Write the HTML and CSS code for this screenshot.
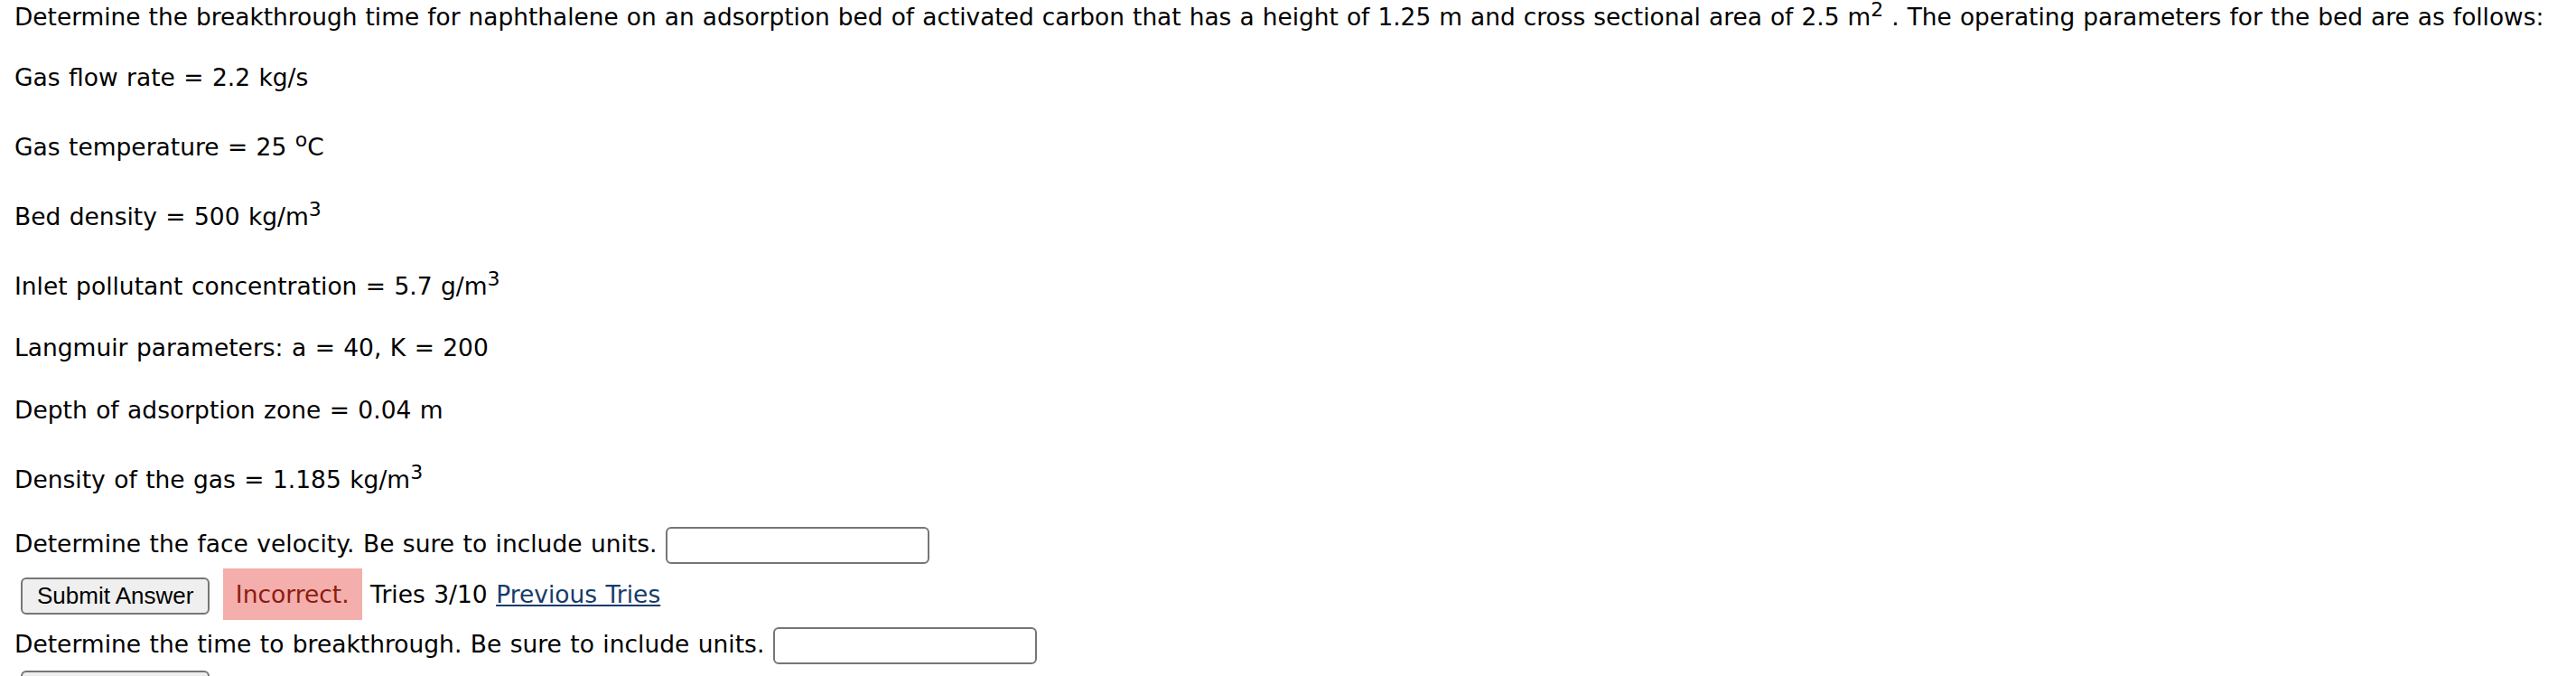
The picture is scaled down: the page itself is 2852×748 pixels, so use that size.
FILE: index.html
```html
<!DOCTYPE html>
<html lang="en">
<head>
<meta charset="utf-8">
<title>Adsorption bed breakthrough</title>
<link rel="stylesheet" href="styles.css">
</head>
<body>
<div class="page">
  <div class="intro">Determine the breakthrough time for naphthalene on an adsorption bed of activated carbon that has a height of 1.25 m and cross sectional area of 2.5 m<sup class="flat">2</sup> . The operating parameters for the bed are as follows:</div>
  <div class="param first">Gas flow rate = 2.2 kg/s</div>
  <div class="param">Gas temperature = 25 <sup>o</sup>C</div>
  <div class="param">Bed density = 500 kg/m<sup>3</sup></div>
  <div class="param">Inlet pollutant concentration = 5.7 g/m<sup>3</sup></div>
  <div class="param">Langmuir parameters: a = 40, K = 200</div>
  <div class="param">Depth of adsorption zone = 0.04 m</div>
  <div class="param">Density of the gas = 1.185 kg/m<sup>3</sup></div>
  <div class="question first-q">Determine the face velocity. Be sure to include units. <input class="answer" type="text"></div>
  <div class="submit-row"><button class="submit" type="button">Submit Answer</button> <span class="incorrect">Incorrect.</span> Tries 3/10 <a class="prev" href="#">Previous Tries</a></div>
  <div class="question">Determine the time to breakthrough. Be sure to include units. <input class="answer" type="text"></div>
  <div class="submit-row last"><button class="submit" type="button">Submit Answer</button></div>
</div>
</body>
</html>
```
FILE: styles.css
```css
html, body {
  margin: 0;
  padding: 0;
  background: #ffffff;
}

.page {
  padding: 3px 16px 0 16px;
  font-family: "DejaVu Sans", Verdana, sans-serif;
  font-size: 26.5px;
  word-spacing: 1px;
  line-height: 32px;
  color: #000000;
}

.intro {
  white-space: nowrap;
  font-size: 26.4px;
  word-spacing: 0.7px;
}

sup {
  font-size: 0.83em;
  vertical-align: super;
}

sup.flat {
  line-height: 0;
}

.param {
  margin-top: 37px;
}

.param.first {
  margin-top: 35px;
}

.question {
  margin-top: 14px;
}

.question.first-q {
  margin-top: 36px;
}

.answer {
  box-sizing: border-box;
  width: 292px;
  height: 41px;
  border: 2px solid #767676;
  border-radius: 6px;
  padding: 2px 4px;
  font-size: 26px;
  font-family: "DejaVu Sans", sans-serif;
  vertical-align: middle;
  background: #ffffff;
}

.submit-row {
  margin-top: 15px;
}

.submit-row.last {
  margin-top: 7px;
}

.submit {
  box-sizing: border-box;
  height: 41px;
  padding: 0 16px;
  margin-left: 7px;
  border: 2px solid #767676;
  border-radius: 6px;
  background: #efefef;
  font-family: "Liberation Sans", Arial, sans-serif;
  font-size: 26px;
  word-spacing: 0;
  color: #000000;
  vertical-align: middle;
}

.incorrect {
  margin-left: 5px;
  padding: 13px 14px;
  background: #f4aeab;
  color: #8b1c12;
}

.prev {
  color: #173b6b;
  text-decoration: underline;
}
```
